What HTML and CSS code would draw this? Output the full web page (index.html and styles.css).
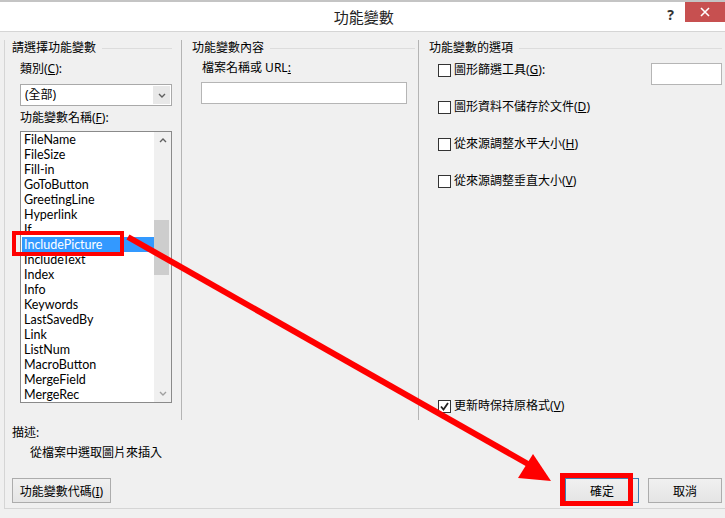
FILE: index.html
```html
<!DOCTYPE html>
<html lang="zh-TW">
<head>
    <meta charset="UTF-8">
    <title>功能變數</title>
    <link rel="stylesheet" href="styles.css">
</head>
<body>
    <div class="topstrip"></div>
    <div class="titlebar">
        <span class="title">功能變數</span>
        <span class="help">?</span>
        <span class="close">
            <svg width="10" height="10" viewBox="0 0 10 10"><path d="M1 1L9 9M9 1L1 9" stroke="#fff" stroke-width="1.6"/></svg>
        </span>
    </div>

    <div class="panel">
        <div class="columns">
            <!-- 左欄：選擇功能變數 -->
            <div class="col col-left">
                <div class="legend"><span>請選擇功能變數</span></div>
                <div class="field-label">類別(<u>C</u>):</div>
                <div class="select">
                    <span class="select-text">(全部)</span>
                    <span class="select-btn">
                        <svg width="8" height="5" viewBox="0 0 8 5"><polyline points="1,1 4,4 7,1" fill="none" stroke="#606060" stroke-width="1.4"/></svg>
                    </span>
                </div>
                <div class="field-label small-gap">功能變數名稱(<u>F</u>):</div>
                <div class="listbox">
                    <ul class="items">
                        <li>FileName</li>
                        <li>FileSize</li>
                        <li>Fill-in</li>
                        <li>GoToButton</li>
                        <li>GreetingLine</li>
                        <li>Hyperlink</li>
                        <li>If</li>
                        <li class="selected">IncludePicture</li>
                        <li>IncludeText</li>
                        <li>Index</li>
                        <li>Info</li>
                        <li>Keywords</li>
                        <li>LastSavedBy</li>
                        <li>Link</li>
                        <li>ListNum</li>
                        <li>MacroButton</li>
                        <li>MergeField</li>
                        <li>MergeRec</li>
                    </ul>
                    <div class="scrollbar">
                        <div class="sb-btn">
                            <svg width="8" height="5" viewBox="0 0 8 5"><polyline points="1,4 4,1 7,4" fill="none" stroke="#606060" stroke-width="1.4"/></svg>
                        </div>
                        <div class="sb-track"><div class="sb-thumb"></div></div>
                        <div class="sb-btn">
                            <svg width="8" height="5" viewBox="0 0 8 5"><polyline points="1,1 4,4 7,1" fill="none" stroke="#a0a0a0" stroke-width="1.4"/></svg>
                        </div>
                    </div>
                </div>
            </div>

            <!-- 中欄：功能變數內容 -->
            <div class="col col-mid">
                <div class="legend"><span>功能變數內容</span></div>
                <div class="url-label">檔案名稱或 URL<u>:</u></div>
                <div class="textbox url-box"></div>
            </div>

            <!-- 右欄：選項 -->
            <div class="col col-right">
                <div class="legend"><span>功能變數的選項</span></div>
                <div class="opt first">
                    <span class="check"></span>
                    <span class="opt-text">圖形篩選工具(<u>G</u>):</span>
                    <div class="textbox filter-box"></div>
                </div>
                <div class="opt">
                    <span class="check"></span>
                    <span class="opt-text">圖形資料不儲存於文件(<u>D</u>)</span>
                </div>
                <div class="opt">
                    <span class="check"></span>
                    <span class="opt-text">從來源調整水平大小(<u>H</u>)</span>
                </div>
                <div class="opt">
                    <span class="check"></span>
                    <span class="opt-text">從來源調整垂直大小(<u>V</u>)</span>
                </div>
                <div class="opt keep">
                    <span class="check">
                        <svg width="11" height="11" viewBox="0 0 11 11"><polyline points="2,5.5 4.5,8.5 9,2" fill="none" stroke="#222" stroke-width="1.8"/></svg>
                    </span>
                    <span class="opt-text">更新時保持原格式(<u>V</u>)</span>
                </div>
            </div>
        </div>

        <div class="desc-label">描述:</div>
        <div class="desc-text">從檔案中選取圖片來插入</div>

        <div class="buttons">
            <button class="btn btn-codes">功能變數代碼(<u>I</u>)</button>
            <button class="btn btn-ok">確定</button>
            <button class="btn btn-cancel">取消</button>
        </div>
    </div>

    <!-- 紅色標註 -->
    <svg class="marks" width="725" height="518" viewBox="0 0 725 518">
        <rect x="14" y="233" width="108" height="21" fill="none" stroke="#f00" stroke-width="4"/>
        <line x1="128" y1="237" x2="528" y2="464" stroke="#f00" stroke-width="6"/>
        <polygon points="518,478 533,454 551,481" fill="#f00"/>
        <rect x="562.5" y="475.5" width="68" height="28" fill="none" stroke="#f00" stroke-width="5"/>
    </svg>
</body>
</html>
```

FILE: styles.css
```css
body {
    margin: 0;
    width: 725px;
    height: 518px;
    overflow: hidden;
    position: relative;
    background-color: #f0f0f0;
    font-family: "Noto Sans", "Noto Sans CJK TC", sans-serif;
    font-size: 12px;
    color: #000;
}
u {
    text-decoration: underline;
    text-underline-offset: 1px;
}
.topstrip {
    height: 2px;
    background-color: #c4c4c4;
}
.titlebar {
    display: flex;
    align-items: center;
    height: 29px;
    background-color: #fff;
    border-bottom: 1px solid #d5d5d5;
}
.title {
    flex: 1;
    text-align: center;
    padding-left: 60px;
    font-family: "Noto Sans CJK TC", sans-serif;
    font-size: 15px;
    color: #222;
}
.help {
    align-self: flex-start;
    margin-top: 3px;
    margin-right: 11px;
    font-weight: bold;
    font-size: 14px;
    color: #333;
}
.close {
    align-self: flex-start;
    width: 40px;
    height: 20px;
    background-color: #c75050;
    display: flex;
    align-items: center;
    justify-content: center;
}

.panel {
    margin-left: 4px;
    border-left: 1px solid #d5d5d5;
    border-bottom: 1px solid #d5d5d5;
    padding: 0 3px 5px 7px;
}
.columns {
    display: grid;
    grid-template-columns: 169px 237px 1fr;
    height: 380px;
    margin-top: 8px;
}
.col {
    display: flex;
    flex-direction: column;
}
.col-left {
    padding-right: 9px;
}
.col-mid {
    border-left: 1px solid #b4b4b4;
    padding-left: 10px;
    padding-right: 3px;
}
.col-right {
    border-left: 1px solid #b4b4b4;
    padding-left: 10px;
}
.legend {
    display: flex;
    align-items: center;
    height: 16px;
    line-height: 16px;
}
.legend::after {
    content: "";
    flex: 1;
    border-top: 1px solid #dcdcdc;
    margin-left: 6px;
}

.field-label {
    margin: 5px 0 0 8px;
    line-height: 16px;
}
.field-label.small-gap {
    margin-top: 4px;
}
.select {
    display: flex;
    margin: 7px 0 0 8px;
    height: 22px;
    box-sizing: border-box;
    border: 1px solid #a9a9a9;
    background-color: #fff;
}
.select-text {
    flex: 1;
    padding-left: 4px;
    line-height: 20px;
}
.select-btn {
    width: 17px;
    margin: 1px;
    background-color: #e8e8e8;
    display: flex;
    align-items: center;
    justify-content: center;
}

.listbox {
    display: flex;
    margin: 5px 0 0 8px;
    height: 272px;
    box-sizing: border-box;
    border: 1px solid #8a8a8a;
    background-color: #fff;
}
.items {
    flex: 1;
    list-style-type: none;
    margin: 0;
    padding: 0 0 0 1px;
    overflow: hidden;
    font-family: Lato, "Noto Sans", sans-serif;
    font-size: 12.5px;
}
.items li {
    height: 15px;
    line-height: 15px;
    padding-left: 2px;
    white-space: nowrap;
}
.items li.selected {
    background-color: #3399ff;
    color: #fff;
}
.scrollbar {
    width: 17px;
    display: flex;
    flex-direction: column;
    background-color: #f0f0f0;
}
.sb-btn {
    height: 17px;
    display: flex;
    align-items: center;
    justify-content: center;
}
.sb-track {
    flex: 1;
    padding-top: 71px;
}
.sb-thumb {
    height: 55px;
    margin-right: 2px;
    background-color: #cdcdcd;
}

.url-label {
    margin: 4px 0 0 10px;
    line-height: 16px;
}
.textbox {
    height: 22px;
    box-sizing: border-box;
    border: 1px solid #b5b5b5;
    background-color: #fff;
}
.url-box {
    margin: 6px 0 0 9px;
    width: 206px;
}

.opt {
    display: flex;
    align-items: center;
    height: 16px;
    margin-top: 21px;
}
.opt.first {
    margin-top: 6px;
}
.opt.keep {
    margin-top: auto;
    margin-bottom: 6px;
}
.check {
    width: 13px;
    height: 13px;
    box-sizing: border-box;
    margin-left: 9px;
    border: 1px solid #333;
    background-color: #fff;
    display: flex;
    align-items: center;
    justify-content: center;
}
.opt-text {
    margin-left: 3px;
    line-height: 16px;
}
.filter-box {
    align-self: flex-start;
    margin: 1px 0 0 auto;
    width: 71px;
}

.desc-label {
    margin-top: 5px;
    line-height: 16px;
}
.desc-text {
    margin: 4px 0 0 18px;
    line-height: 16px;
}
.buttons {
    display: flex;
    margin-top: 17px;
}
.btn {
    height: 25px;
    box-sizing: border-box;
    border: 1px solid #acacac;
    background: linear-gradient(#f0f0f0, #e5e5e5);
    font-family: "Noto Sans", "Noto Sans CJK TC", sans-serif;
    font-size: 12px;
    color: #000;
    padding: 0;
}
.btn-codes {
    width: 99px;
}
.btn-ok {
    width: 74px;
    margin-left: auto;
    border-color: #3c7fb1;
}
.btn-cancel {
    width: 74px;
    margin-left: 9px;
}

.marks {
    position: absolute;
    top: 0;
    left: 0;
    pointer-events: none;
}
```
